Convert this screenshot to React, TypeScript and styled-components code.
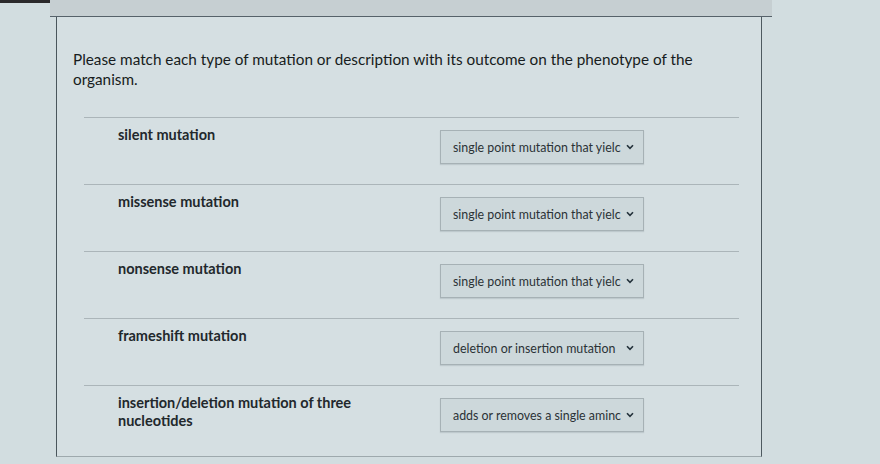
import React from 'react';
import styled, { createGlobalStyle } from 'styled-components';

type Pair = {
    term: string;
    answer: string;
}

// the dropdowns only show the start of the chosen answer
const pairs: Pair[] = [
    { term: 'silent mutation', answer: 'single point mutation that yielc' },
    { term: 'missense mutation', answer: 'single point mutation that yielc' },
    { term: 'nonsense mutation', answer: 'single point mutation that yielc' },
    { term: 'frameshift mutation', answer: 'deletion or insertion mutation' },
    { term: 'insertion/deletion mutation of three nucleotides', answer: 'adds or removes a single aminc' },
];

const GlobalStyle = createGlobalStyle`
    html, body {
        margin: 0;
        padding: 0;
        background: #d2dde0;
        font-family: Lato, "Open Sans", sans-serif;
    }
`;

const Page = styled.div`
    width: 880px;
    height: 464px;
    overflow: hidden;
    display: flex;
    flex-direction: column;
`;

const TopBar = styled.div`
    display: flex;
    height: 17px;
`;

const Corner = styled.div`
    width: 50px;
    height: 3px;
    background: #2b2a2c;
`;

const TopBand = styled.div`
    width: 722px;
    background: #c6cfd2;
    border-bottom: 1px solid #56626a;
`;

const Panel = styled.div`
    margin-left: 56px;
    width: 706px;
    height: 440px;
    box-sizing: border-box;
    border-left: 1px solid #4a565c;
    border-right: 1px solid #4e5a60;
    border-bottom: 1px solid #9ea9ad;
    background: #d5dfe2;
    padding: 32px 0 0 16px;
`;

const Question = styled.p`
    margin: 0 0 28px;
    font-size: 15.3px;
    line-height: 20px;
    color: #171c20;
`;

const Rows = styled.ul`
    list-style: none;
    margin: 0 22px 0 11px;
    padding: 0;
`;

const Row = styled.li`
    display: flex;
    align-items: flex-start;
    height: 67px;
    box-sizing: border-box;
    border-top: 1px solid #abb5b9;
    padding: 8px 0 0 34px;
`;

const Term = styled.div`
    flex: 0 0 322px;
    box-sizing: border-box;
    padding-right: 66px;
    font-size: 14.5px;
    font-weight: 700;
    line-height: 18px;
    color: #22282c;
`;

const Select = styled.div`
    margin-top: 4px;
    width: 204px;
    height: 34px;
    box-sizing: border-box;
    display: flex;
    align-items: center;
    justify-content: space-between;
    gap: 5px;
    padding: 0 9px 0 12px;
    border: 1px solid #a6b1b5;
    background: #cdd8db;
    box-shadow: 0 1px 1px rgba(60, 80, 90, 0.15);
`;

const Value = styled.span`
    white-space: nowrap;
    font-size: 12.4px;
    color: #2b3236;
`;

const Chevron = () => <svg width="8" height="6" viewBox="0 0 8 6">
    <polyline points="1,1.2 4,4.4 7,1.2" fill="none" stroke="#24323b" strokeWidth="1.6" />
</svg>;

export default function App() {
    return <>
        <GlobalStyle />
        <Page>
            <TopBar>
                <Corner />
                <TopBand />
            </TopBar>
            <Panel>
                <Question>
                    Please match each type of mutation or description with its outcome on the phenotype of the<br />
                    organism.
                </Question>
                <Rows>
                    {pairs.map(pair => <Row key={pair.term}>
                        <Term>{pair.term}</Term>
                        <Select>
                            <Value>{pair.answer}</Value>
                            <Chevron />
                        </Select>
                    </Row>)}
                </Rows>
            </Panel>
        </Page>
    </>;
}
